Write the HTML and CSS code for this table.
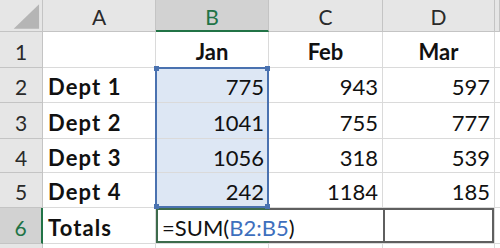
FILE: index.html
```html
<!DOCTYPE html>
<html>
<head>
<meta charset="utf-8">
<link rel="stylesheet" href="styles.css">
</head>
<body>
<div class="sheet">
  <div class="hd corner"><svg width="43" height="32" viewBox="0 0 43 32"><polygon points="40,4 40,29 14,29" fill="#b5b5b5"/></svg></div>
  <div class="hd col">A</div>
  <div class="hd col sel">B</div>
  <div class="hd col">C</div>
  <div class="hd col">D</div>
  <div class="hd col edge"></div>

  <div class="hd row">1</div>
  <div class="c"></div>
  <div class="c b ctr">Jan</div>
  <div class="c b ctr">Feb</div>
  <div class="c b ctr">Mar</div>
  <div class="c edge"></div>

  <div class="hd row">2</div>
  <div class="c b lbl">Dept 1</div>
  <div class="c n hl first"><span>775</span><div class="range"><i class="h tl"></i><i class="h tr"></i><i class="h bl"></i><i class="h br"></i></div></div>
  <div class="c n">943</div>
  <div class="c n">597</div>
  <div class="c edge"></div>

  <div class="hd row">3</div>
  <div class="c b lbl">Dept 2</div>
  <div class="c n hl">1041</div>
  <div class="c n">755</div>
  <div class="c n">777</div>
  <div class="c edge"></div>

  <div class="hd row">4</div>
  <div class="c b lbl">Dept 3</div>
  <div class="c n hl">1056</div>
  <div class="c n">318</div>
  <div class="c n">539</div>
  <div class="c edge"></div>

  <div class="hd row">5</div>
  <div class="c b lbl">Dept 4</div>
  <div class="c n hl">242</div>
  <div class="c n">1184</div>
  <div class="c n">185</div>
  <div class="c edge"></div>

  <div class="hd row active">6</div>
  <div class="c b lbl">Totals</div>
  <div class="c edit"><span class="ftext">=SUM(<span class="ref">B2:B5</span>)</span></div>
  <div class="c boxed open"></div>
  <div class="c boxed"></div>
  <div class="c edge"></div>

  <div class="hd row"></div>
  <div class="c"></div>
  <div class="c"></div>
  <div class="c"></div>
  <div class="c"></div>
  <div class="c edge"></div>
</div>
</body>
</html>
```

FILE: styles.css
```css
html, body {
  margin: 0;
  padding: 0;
  background: #ffffff;
}
body {
  width: 500px;
  height: 248px;
  overflow: hidden;
  font-family: Lato, "Open Sans", sans-serif;
  color: #111;
}
.sheet {
  display: grid;
  grid-template-columns: 43px 113px 113px 114px 112px 5px;
  grid-template-rows: 32px 36px 35px 36px 34px 35px 36px 10px;
  width: 500px;
}
.hd {
  background: #e6e6e6;
  box-sizing: border-box;
  border-right: 1px solid #c4c4c4;
  border-bottom: 1px solid #c4c4c4;
  display: flex;
  align-items: center;
  justify-content: center;
  font-size: 21px;
  color: #2a2a2a;
}
.corner svg {
  display: block;
}
.col {
  padding-top: 2px;
}
.col.sel {
  background: #d2d2d2;
  color: #217346;
  border-bottom: 2px solid #217346;
}
.row {
  padding-top: 3px;
}
.row.active {
  background: #d2d2d2;
  color: #217346;
  border-right: 2px solid #217346;
}
.c {
  box-sizing: border-box;
  border-right: 1px solid #dadada;
  border-bottom: 1px solid #dadada;
  display: flex;
  align-items: center;
  padding: 3px 5px 0 5px;
  font-size: 22px;
  white-space: nowrap;
}
.c.edge {
  border-right: none;
}
.b {
  font-weight: 700;
}
.lbl {
  letter-spacing: 1.1px;
}
.ctr {
  justify-content: center;
}
.n {
  justify-content: flex-end;
  padding-right: 4px;
}
.hl {
  background: #dde7f4;
}
.first {
  position: relative;
}
.range {
  position: absolute;
  left: -1px;
  top: -1px;
  width: 114px;
  height: 141px;
  box-sizing: border-box;
  border: 2px solid #4a72b0;
  pointer-events: none;
  z-index: 2;
}
.h {
  position: absolute;
  width: 5px;
  height: 5px;
  background: #4a72b0;
}
.h.tl { left: -3px; top: -3px; }
.h.tr { right: -3px; top: -3px; }
.h.bl { left: -3px; bottom: -3px; }
.h.br { right: -3px; bottom: -3px; }
.edit {
  border-right: none;
  box-shadow: inset 2px 0 0 #3d6b4c, inset 0 2px 0 #3d6b4c, inset 0 -2px 0 #3d6b4c;
  padding-left: 6px;
  overflow: visible;
  position: relative;
  z-index: 1;
}
.ref {
  color: #3e6fbd;
}
.boxed {
  box-shadow: inset 0 0 0 2px #5f5f5f;
}
.boxed.open {
  border-right: none;
  box-shadow: inset 0 2px 0 #5f5f5f, inset 0 -2px 0 #5f5f5f;
}
```
